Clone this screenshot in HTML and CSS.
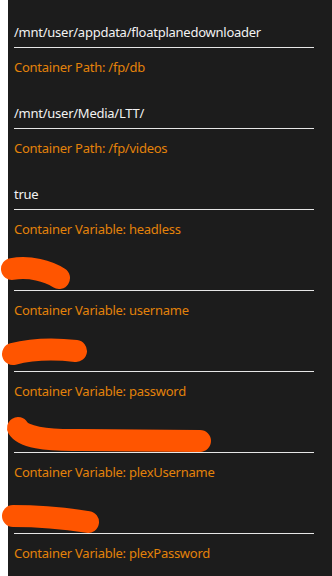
FILE: index.html
```html
<!DOCTYPE html>
<html lang="en">
<head>
  <meta charset="UTF-8" />
  <meta name="viewport" content="width=device-width, initial-scale=1" />
  <title>Container Settings</title>
  <link rel="stylesheet" href="styles.css">
</head>
<body>
  <main class="panel">
    <div class="field">
      <div class="value">/mnt/user/appdata/floatplanedownloader</div>
      <div class="label">Container Path: /fp/db</div>
    </div>
    <div class="field">
      <div class="value">/mnt/user/Media/LTT/</div>
      <div class="label">Container Path: /fp/videos</div>
    </div>
    <div class="field">
      <div class="value">true</div>
      <div class="label">Container Variable: headless</div>
    </div>
    <div class="field">
      <div class="value"></div>
      <div class="label">Container Variable: username</div>
    </div>
    <div class="field">
      <div class="value"></div>
      <div class="label">Container Variable: password</div>
    </div>
    <div class="field">
      <div class="value"></div>
      <div class="label">Container Variable: plexUsername</div>
    </div>
    <div class="field">
      <div class="value"></div>
      <div class="label">Container Variable: plexPassword</div>
    </div>
  </main>

  <!-- redaction marks drawn over the secret values -->
  <svg class="redact" width="332" height="576" viewBox="0 0 332 576">
    <g fill="none" stroke="#ff5500" stroke-width="22" stroke-linecap="round">
      <path d="M12 269 C 30 266, 48 271, 59 278" />
      <path d="M13 354 Q 40 347, 76 351" />
      <path d="M18 428 Q 26 441, 80 440 L 200 441" />
      <path d="M13 516 Q 50 516, 88 522" />
    </g>
  </svg>
</body>
</html>
```

FILE: styles.css
```css
* {
  box-sizing: border-box;
  margin: 0;
  padding: 0;
}

body {
  background: #fff;
  font-family: 'Noto Sans', 'Open Sans', sans-serif;
  font-size: 13px;
  letter-spacing: -0.25px;
  position: relative;
  min-height: 576px;
}

.panel {
  margin-left: 8px;
  min-height: 576px;
  background: #1c1c1c;
  padding: 22px 0 0 6px;
}

.field {
  width: 300px;
  height: 81px;
}

.value {
  color: #f2f2f2;
  line-height: 20px;
  height: 26px;
  border-bottom: 1px solid #e6e6e6;
}

.label {
  color: #e3820a;
  line-height: 20px;
  margin-top: 9px;
}

.redact {
  position: absolute;
  top: 0;
  left: 0;
  pointer-events: none;
}
```
